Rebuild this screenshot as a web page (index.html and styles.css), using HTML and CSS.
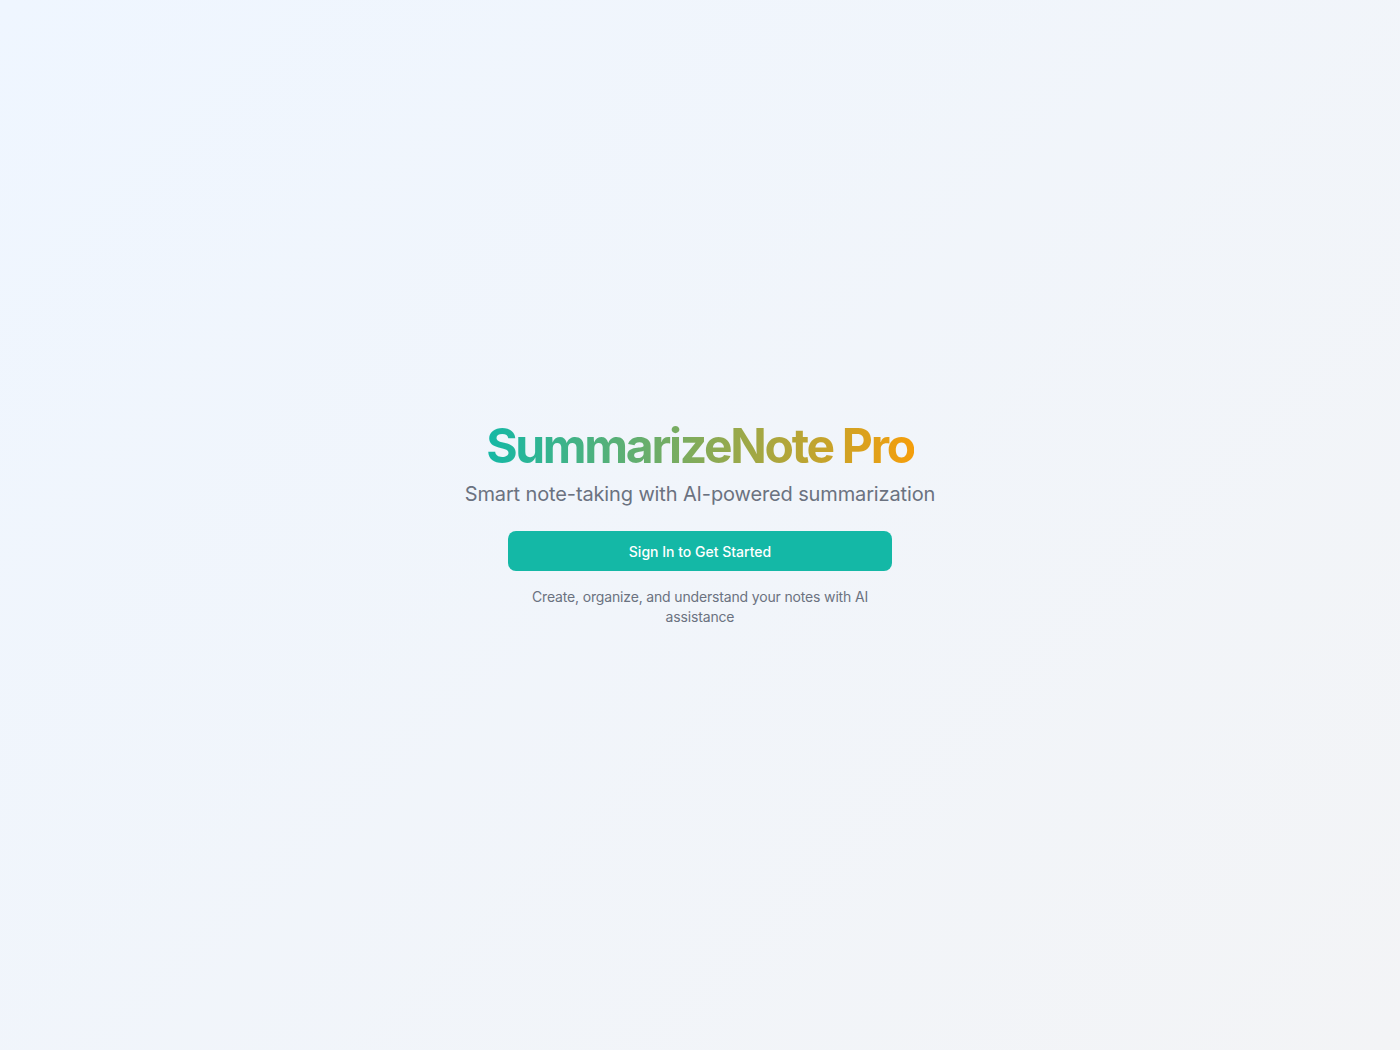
FILE: index.html
```html
<!DOCTYPE html>
<html lang="en">
<head>
<meta charset="utf-8">
<title>SummarizeNote Pro</title>
<link rel="stylesheet" href="styles.css">
</head>
<body>
<main class="page">
  <section class="hero">
    <h1 class="title">SummarizeNote Pro</h1>
    <p class="subtitle">Smart note-taking with AI-powered summarization</p>
    <button class="cta" type="button">Sign In to Get Started</button>
    <p class="note">Create, organize, and understand your notes with AI assistance</p>
  </section>
</main>
</body>
</html>
```
FILE: styles.css
```css
* { box-sizing: border-box; }
html, body { margin: 0; padding: 0; height: 100%; }
body {
  font-family: "Inter", "Noto Sans", sans-serif;
  background: linear-gradient(135deg, #eff6ff 0%, #f3f4f6 100%);
  min-height: 100vh;
}
.page {
  min-height: 100vh;
  display: flex;
  align-items: center;
  justify-content: center;
}
.hero {
  display: flex;
  flex-direction: column;
  align-items: center;
  text-align: center;
  margin-top: -3px;
}
.title {
  margin: 0 0 10px;
  padding-top: 2px;
  font-size: 48px;
  line-height: 48px;
  font-weight: 700;
  letter-spacing: -2.3px;
  background: linear-gradient(90deg, #14b8a6 0%, #f59e0b 100%);
  -webkit-background-clip: text;
  background-clip: text;
  color: transparent;
}
.subtitle {
  margin: 0 0 23px;
  font-size: 20px;
  line-height: 28px;
  letter-spacing: -0.13px;
  color: #6b7280;
}
.cta {
  width: 384px;
  height: 40px;
  border: none;
  border-radius: 8px;
  background: #14b8a6;
  color: #fff;
  font-family: inherit;
  font-size: 14px;
  font-weight: 500;
  cursor: pointer;
}
.note {
  margin: 16px 0 0;
  max-width: 384px;
  font-size: 14px;
  line-height: 20px;
  letter-spacing: -0.16px;
  color: #6b7280;
}
```
